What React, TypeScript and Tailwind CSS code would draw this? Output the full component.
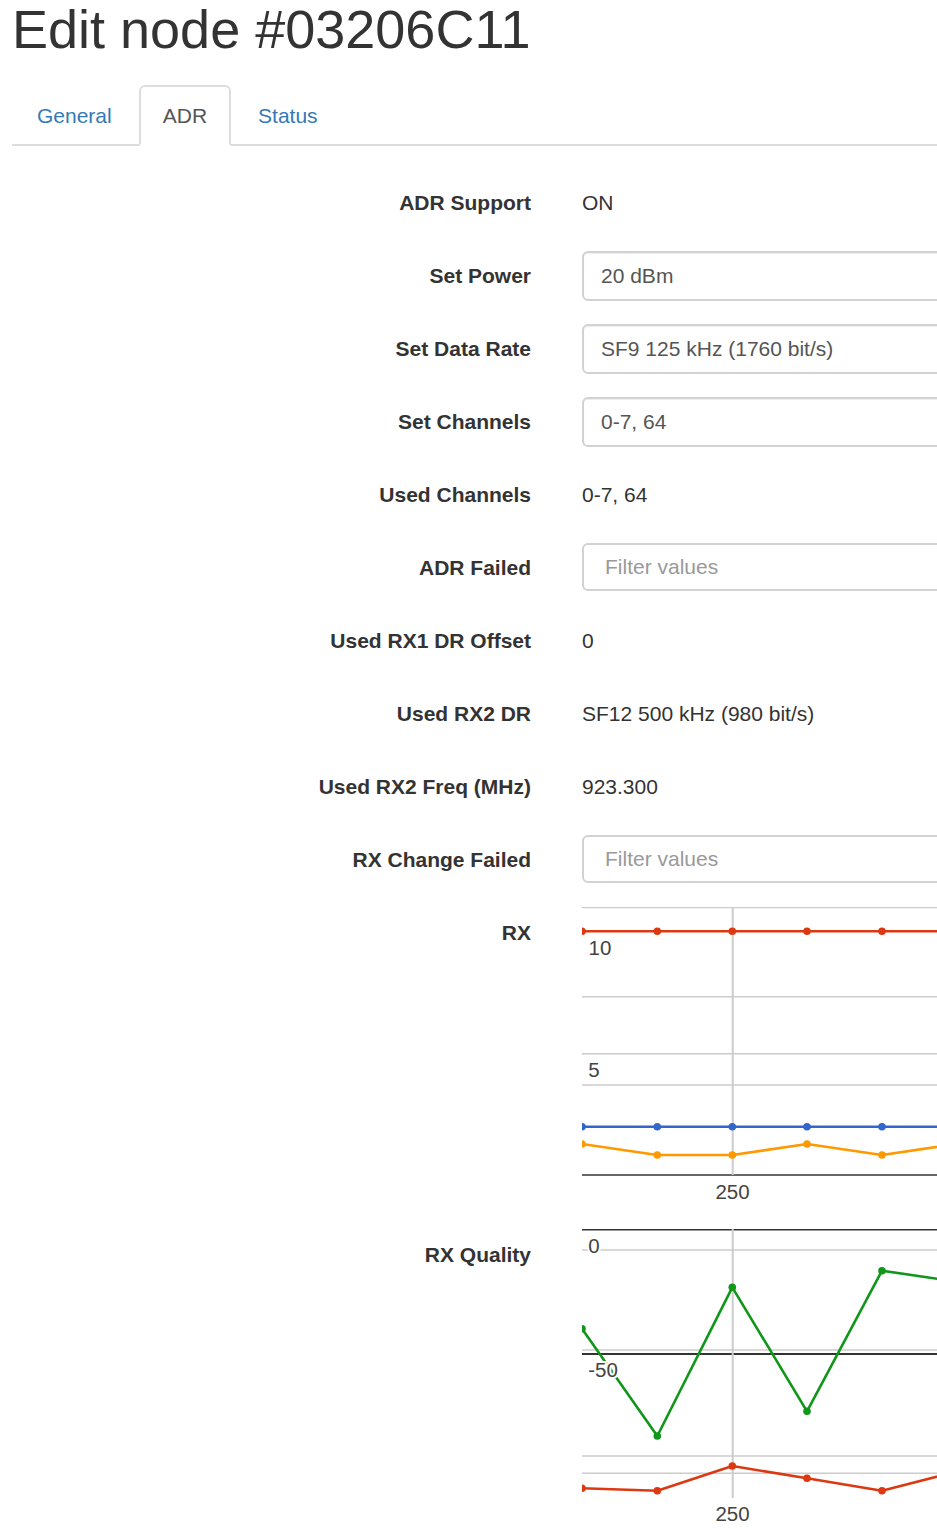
import React from "react";

type Row =
  | { label: string; kind: "text"; value: string }
  | { label: string; kind: "input"; value: string }
  | { label: string; kind: "filter" };

const rows: Row[] = [
  { label: "ADR Support", kind: "text", value: "ON" },
  { label: "Set Power", kind: "input", value: "20 dBm" },
  { label: "Set Data Rate", kind: "input", value: "SF9 125 kHz (1760 bit/s)" },
  { label: "Set Channels", kind: "input", value: "0-7, 64" },
  { label: "Used Channels", kind: "text", value: "0-7, 64" },
  { label: "ADR Failed", kind: "filter" },
  { label: "Used RX1 DR Offset", kind: "text", value: "0" },
  { label: "Used RX2 DR", kind: "text", value: "SF12 500 kHz (980 bit/s)" },
  { label: "Used RX2 Freq (MHz)", kind: "text", value: "923.300" },
  { label: "RX Change Failed", kind: "filter" },
];

const xs = [0, 75.3, 150.3, 225, 300, 375];

interface Series {
  color: string;
  ys: number[];
}

interface HLine {
  y: number;
  color: string;
  width: number;
}

interface Label {
  text: string;
  x: number;
  y: number;
  anchor?: "start" | "middle";
}

const ChartSvg = ({
  lines,
  series,
  labels,
  vBottom,
}: {
  lines: HLine[];
  series: Series[];
  labels: Label[];
  vBottom: number;
}) => (
  <svg width={420} height={300} className="block shrink-0">
    {lines.map((l, i) => (
      <line key={i} x1={0} x2={420} y1={l.y} y2={l.y} stroke={l.color} strokeWidth={l.width} />
    ))}
    <line x1={150.7} x2={150.7} y1={0} y2={vBottom} stroke="#cccccc" strokeWidth={2} />
    {series.map((s, i) => (
      <g key={i}>
        <polyline
          points={xs.map((x, j) => `${x},${s.ys[j]}`).join(" ")}
          fill="none"
          stroke={s.color}
          strokeWidth={2.6}
          strokeLinejoin="round"
        />
        {xs.map((x, j) => (
          <circle key={j} cx={x} cy={s.ys[j]} r={3.8} fill={s.color} />
        ))}
      </g>
    ))}
    {labels.map((l, i) => (
      <text
        key={i}
        x={l.x}
        y={l.y}
        textAnchor={l.anchor ?? "start"}
        fontFamily="'Liberation Sans', Arial, sans-serif"
        fontSize={20.5}
        fill="#444444"
        stroke="#ffffff"
        strokeWidth={4}
        paintOrder="stroke"
      >
        {l.text}
      </text>
    ))}
  </svg>
);

const RxChart = () => (
  <ChartSvg
    vBottom={268}
    lines={[
      { y: 0.5, color: "#cccccc", width: 1.5 },
      { y: 89.7, color: "#cccccc", width: 1.5 },
      { y: 146.7, color: "#cccccc", width: 1.5 },
      { y: 178, color: "#cccccc", width: 1.5 },
      { y: 268, color: "#333333", width: 1.5 },
    ]}
    series={[
      { color: "#dc3912", ys: [24.3, 24.3, 24.3, 24.3, 24.3, 24.3] },
      { color: "#3366cc", ys: [219.7, 219.7, 219.7, 219.7, 219.7, 219.7] },
      { color: "#ff9900", ys: [237, 248, 248, 237, 248, 237] },
    ]}
    labels={[
      { text: "10", x: 6.5, y: 48.2 },
      { text: "5", x: 6.3, y: 170.2 },
      { text: "250", x: 150.5, y: 292.2, anchor: "middle" },
    ]}
  />
);

const QualityChart = () => (
  <ChartSvg
    vBottom={269}
    lines={[
      { y: 0.7, color: "#333333", width: 1.5 },
      { y: 21, color: "#cccccc", width: 1.5 },
      { y: 121, color: "#cccccc", width: 1.5 },
      { y: 125, color: "#333333", width: 2 },
      { y: 227, color: "#cccccc", width: 1.5 },
      { y: 244.3, color: "#cccccc", width: 1.5 },
    ]}
    series={[
      { color: "#109618", ys: [99.7, 207, 58.3, 182.3, 41.7, 52.6] },
      { color: "#dc3912", ys: [259.3, 261.7, 237, 249.3, 261.7, 242.6] },
    ]}
    labels={[
      { text: "0", x: 6.3, y: 24.2 },
      { text: "-50", x: 6.3, y: 148.2 },
      { text: "250", x: 150.5, y: 292.2, anchor: "middle" },
    ]}
  />
);

const FieldLabel = ({ children }: { children: React.ReactNode }) => (
  <div className="w-[519px] shrink-0 h-[50px] flex items-center justify-end text-right font-bold text-[21px] leading-[30px] text-[#333]">
    {children}
  </div>
);

export default function App() {
  return (
    <div className="w-[937px] h-[1529px] overflow-hidden bg-white pl-[12px] font-['Liberation_Sans',Arial,sans-serif] text-[#333]">
      <h1 className="mb-[26px] text-[54px] leading-[59px] font-normal text-[#333] whitespace-nowrap">
        Edit node #03206C11
      </h1>

      <ul className="flex w-[1000px] pl-px border-b-2 border-[#dddddd]">
        {["General", "ADR", "Status"].map((tab) => {
          const active = tab === "ADR";
          return (
            <li key={tab} className="-mb-[2px] mr-[3px]">
              <a
                href="#"
                className={`flex h-[61px] items-center px-[22px] text-[21px] leading-[30px] rounded-t-[6px] border-2 ${
                  active
                    ? "border-[#dddddd] border-b-white bg-white text-[#555555]"
                    : "border-transparent text-[#337ab7]"
                }`}
              >
                {tab}
              </a>
            </li>
          );
        })}
      </ul>

      <div className="mt-[32px]">
        {rows.map((row) => (
          <div key={row.label} className="flex items-start h-[50px] mb-[23px]">
            <FieldLabel>{row.label}</FieldLabel>
            <div className="ml-[51px] w-[500px] shrink-0">
              {row.kind === "text" && (
                <div className="h-[50px] flex items-center text-[21px] leading-[30px] text-[#333]">
                  {row.value}
                </div>
              )}
              {row.kind === "input" && (
                <div className="h-[50px] flex items-center px-[17px] border-2 border-[#d2d2d2] rounded-[6px] shadow-[inset_0_1px_1px_rgba(0,0,0,0.075)] text-[21px] text-[#555555]">
                  {row.value}
                </div>
              )}
              {row.kind === "filter" && (
                <div className="h-[48px] flex items-center px-[21px] border-2 border-[#d2d2d2] rounded-[6px] text-[21px] text-[#999999]">
                  Filter values
                </div>
              )}
            </div>
          </div>
        ))}

        <div className="flex items-start mb-[23px]">
          <FieldLabel>RX</FieldLabel>
          <div className="ml-[51px] -mt-px h-[299px] overflow-hidden">
            <RxChart />
          </div>
        </div>

        <div className="flex items-start">
          <div className="mt-px">
            <FieldLabel>RX Quality</FieldLabel>
          </div>
          <div className="ml-[51px] h-[300px] overflow-hidden">
            <QualityChart />
          </div>
        </div>
      </div>
    </div>
  );
}
